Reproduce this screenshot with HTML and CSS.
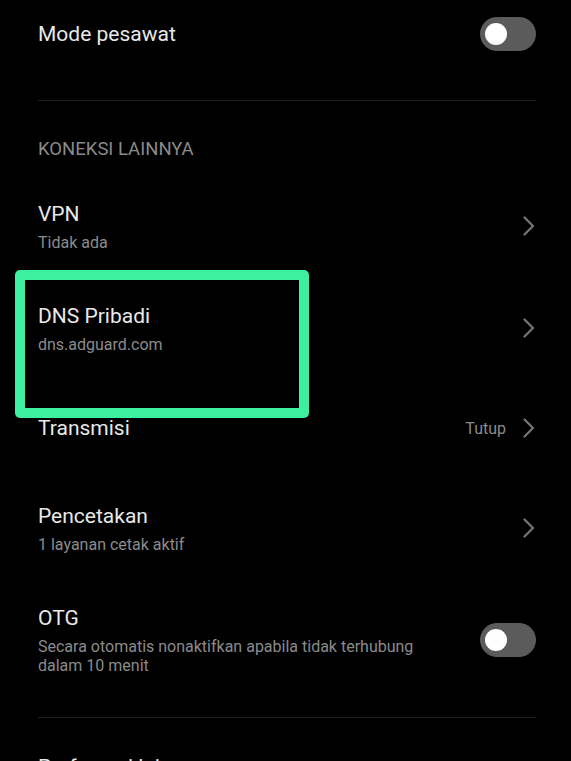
FILE: index.html
```html
<!DOCTYPE html>
<html lang="id">
<head>
    <meta charset="UTF-8">
    <meta name="viewport" content="width=device-width, initial-scale=1.0">
    <title>Koneksi &amp; berbagi</title>
    <link rel="stylesheet" href="styles.css">
</head>
<body>
    <div class="settings">
        <div class="row">
            <div class="text">
                <div class="title">Mode pesawat</div>
            </div>
            <span class="switch"></span>
        </div>

        <div class="divider"></div>

        <div class="section-title">KONEKSI LAINNYA</div>

        <div class="row">
            <div class="text">
                <div class="title">VPN</div>
                <div class="subtitle">Tidak ada</div>
            </div>
            <svg class="chevron" viewBox="0 0 12 20"><path d="M1.5 1.5 L10 10 L1.5 18.5"/></svg>
        </div>

        <div class="row highlighted">
            <div class="text">
                <div class="title">DNS Pribadi</div>
                <div class="subtitle">dns.adguard.com</div>
            </div>
            <svg class="chevron" viewBox="0 0 12 20"><path d="M1.5 1.5 L10 10 L1.5 18.5"/></svg>
            <!-- green annotation frame over the row -->
            <span class="mark"></span>
        </div>

        <div class="row">
            <div class="text">
                <div class="title">Transmisi</div>
            </div>
            <span class="value">Tutup</span>
            <svg class="chevron" viewBox="0 0 12 20"><path d="M1.5 1.5 L10 10 L1.5 18.5"/></svg>
        </div>

        <div class="row">
            <div class="text">
                <div class="title">Pencetakan</div>
                <div class="subtitle">1 layanan cetak aktif</div>
            </div>
            <svg class="chevron" viewBox="0 0 12 20"><path d="M1.5 1.5 L10 10 L1.5 18.5"/></svg>
        </div>

        <div class="row">
            <div class="text">
                <div class="title">OTG</div>
                <div class="subtitle">Secara otomatis nonaktifkan apabila tidak terhubung dalam 10 menit</div>
            </div>
            <span class="switch"></span>
        </div>

        <div class="divider"></div>

        <div class="row">
            <div class="text">
                <div class="title">Preferensi lainnya</div>
            </div>
        </div>
    </div>
</body>
</html>
```

FILE: styles.css
```css
/* General Styles */
body {
    margin: 0;
    height: 761px;
    overflow: hidden;
    background: #000;
    font-family: Roboto, "Liberation Sans", sans-serif;
    color: #e8e8e8;
}

/* list is scrolled a little, first row sits partly above the top edge */
.settings {
    margin-top: -15px;
    padding: 0 35px 0 38px;
}

.row {
    display: flex;
    align-items: center;
    box-sizing: border-box;
    min-height: 98px;
    padding: 25px 0;
}

.text {
    flex: 1;
    margin-right: 30px;
}

.title {
    font-size: 21px;
    line-height: 28px;
    color: #e8e8e8;
}

.subtitle {
    margin-top: 5px;
    font-size: 16px;
    line-height: 19px;
    color: #8b8b8b;
}

.value {
    font-size: 16px;
    color: #8b8b8b;
    margin-right: 17px;
}

.chevron {
    width: 12px;
    height: 20px;
    flex: none;
    margin-right: 1px;
}

.chevron path {
    fill: none;
    stroke: #767676;
    stroke-width: 2.2;
    stroke-linecap: round;
    stroke-linejoin: round;
}

.switch {
    position: relative;
    flex: none;
    width: 56px;
    height: 34px;
    border-radius: 17px;
    background: #5b5b5b;
}

.switch::after {
    content: "";
    position: absolute;
    left: 5px;
    top: 6px;
    width: 22px;
    height: 22px;
    border-radius: 50%;
    background: #fff;
}

.divider {
    height: 1px;
    margin-top: 17px;
    background: #202020;
}

.section-title {
    padding: 36px 0 14px;
    font-size: 18.5px;
    line-height: 24px;
    color: #8a8a8a;
}

/* annotation frame */
.highlighted {
    position: relative;
}

.mark {
    position: absolute;
    left: -23px;
    top: -7px;
    width: 294px;
    height: 148px;
    box-sizing: border-box;
    border: 10px solid #3cf0a0;
    border-radius: 5px;
}
```
